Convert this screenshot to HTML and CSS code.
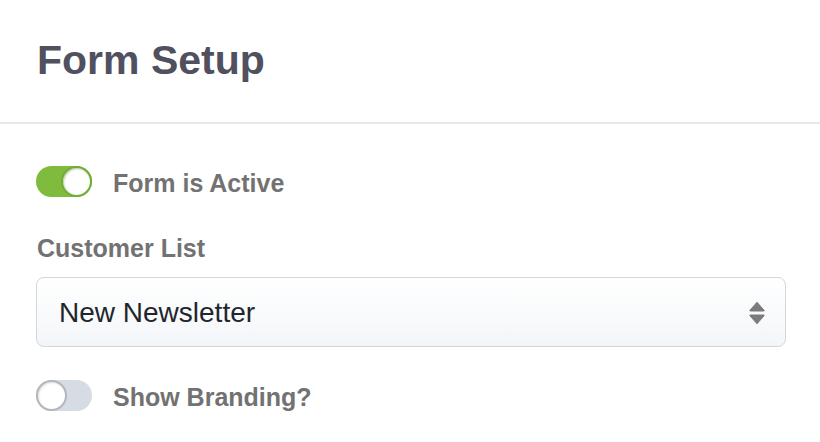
FILE: index.html
```html
<!DOCTYPE html>
<html lang="en">
<head>
<meta charset="utf-8">
<title>Form Setup</title>
<link rel="stylesheet" href="styles.css">
</head>
<body>
<div class="panel">
  <header class="panel-header">
    <h1 class="panel-title">Form Setup</h1>
  </header>
  <section class="panel-body">
    <div class="toggle-row">
      <span class="toggle toggle-on"><span class="knob"></span></span>
      <span class="toggle-label">Form is Active</span>
    </div>
    <label class="field-label">Customer List</label>
    <div class="select">
      <span class="select-value">New Newsletter</span>
      <svg class="select-arrows" width="16" height="24" viewBox="0 0 16 24" aria-hidden="true">
        <path d="M8 1.2 L15 9.2 Q15.6 10 14.6 10 L1.4 10 Q0.4 10 1 9.2 Z" fill="#7b7b7e" stroke="#7b7b7e" stroke-width="1" stroke-linejoin="round"/>
        <path d="M8 22.8 L15 14.8 Q15.6 14 14.6 14 L1.4 14 Q0.4 14 1 14.8 Z" fill="#7b7b7e" stroke="#7b7b7e" stroke-width="1" stroke-linejoin="round"/>
      </svg>
    </div>
    <div class="toggle-row toggle-row-last">
      <span class="toggle toggle-off"><span class="knob"></span></span>
      <span class="toggle-label">Show Branding?</span>
    </div>
  </section>
</div>
</body>
</html>
```

FILE: styles.css
```css
html, body {
  margin: 0;
  padding: 0;
  background: #ffffff;
}

body {
  font-family: "Liberation Sans", Arial, Helvetica, sans-serif;
}

.panel-header {
  padding: 36px 37px 38px;
  border-bottom: 2px solid #e8e8ea;
}

.panel-title {
  margin: 0;
  font-size: 41px;
  line-height: 48px;
  font-weight: 700;
  color: #50505f;
}

.panel-body {
  padding: 42px 34px 0 36px;
}

.toggle-row {
  display: flex;
  align-items: flex-start;
  gap: 21px;
}

.toggle {
  position: relative;
  display: inline-block;
  width: 56px;
  height: 31px;
  border-radius: 16px;
  flex: none;
}

.toggle-on {
  background: #7fbb3d;
}

.toggle-off {
  background: #d5dce4;
}

.knob {
  position: absolute;
  top: 0;
  width: 27px;
  height: 27px;
  border-radius: 50%;
  background: #ffffff;
}

.toggle-on .knob {
  right: 0;
  border: 2px solid #73ad35;
  box-shadow: inset 1px 1px 2px rgba(60, 100, 20, 0.35);
}

.toggle-off .knob {
  left: 0;
  border: 2px solid #b3b6ba;
  box-shadow: inset 1px 1px 2px rgba(0, 0, 0, 0.12);
}

.toggle-label {
  font-size: 25px;
  line-height: 28px;
  font-weight: 700;
  color: #727272;
  padding-top: 3px;
}

.field-label {
  display: block;
  margin: 37px 0 15px 1px;
  font-size: 25px;
  line-height: 28px;
  font-weight: 700;
  color: #727272;
}

.select {
  display: flex;
  align-items: center;
  justify-content: space-between;
  box-sizing: border-box;
  width: 750px;
  height: 70px;
  padding: 0 20px 0 22px;
  border: 1.5px solid #d6d6d8;
  border-radius: 8px;
  background: linear-gradient(#ffffff, #f3f6f9);
}

.select-value {
  font-size: 28px;
  color: #22252d;
  padding-top: 2px;
}

.select-arrows {
  display: block;
  margin-top: 1px;
}

.toggle-row-last {
  margin-top: 33px;
}
```
